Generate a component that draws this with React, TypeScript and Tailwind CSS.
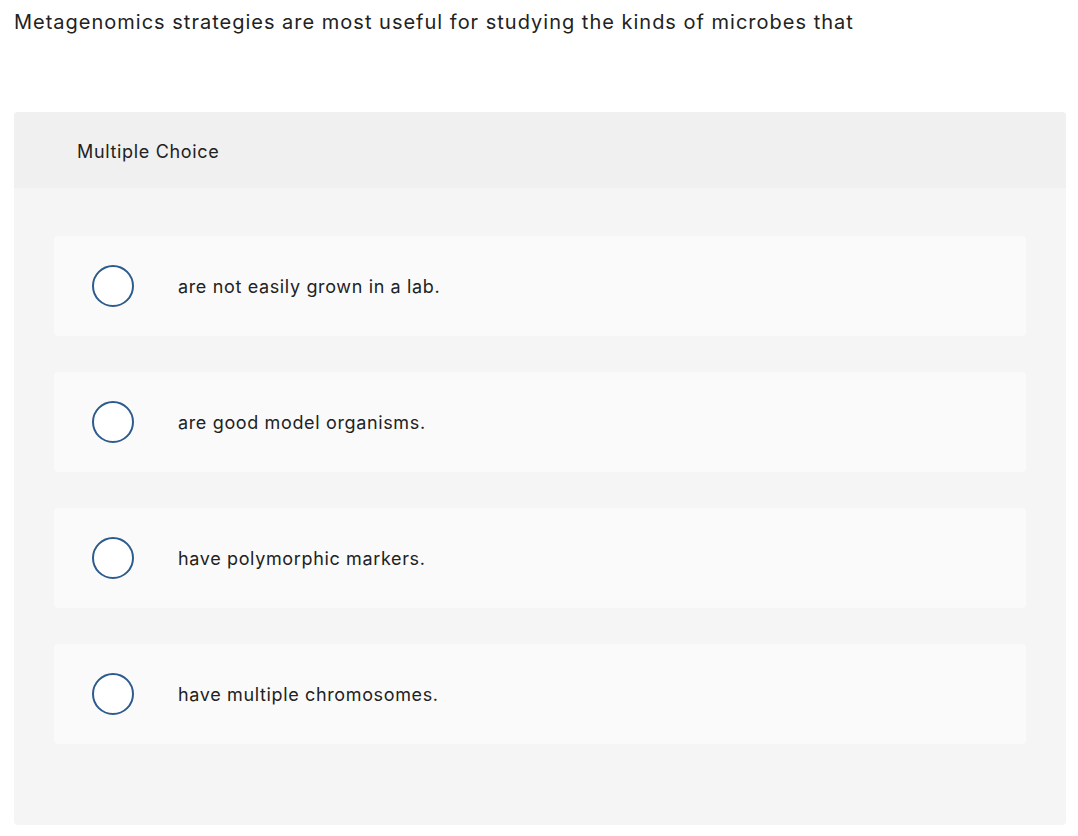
import React from "react";

const options = [
  "are not easily grown in a lab.",
  "are good model organisms.",
  "have polymorphic markers.",
  "have multiple chromosomes.",
];

export default function App() {
  return (
    <div className="min-h-[836px] bg-white text-[#222] font-['Inter','Open_Sans',sans-serif]">
      <div className="pl-[14px] pt-[8px]">
        <p className="text-[20px] leading-[28px] tracking-[1px]">
          Metagenomics strategies are most useful for studying the kinds of microbes that
        </p>
      </div>
      <div className="ml-[14px] mr-[12px] mt-[76px] rounded-[4px] bg-[#f5f5f5] overflow-hidden">
        <div className="h-[76px] bg-[#f0f0f0] flex items-center pl-[63px] pt-[2px]">
          <span className="text-[18px] tracking-[0.66px]">Multiple Choice</span>
        </div>
        <div className="px-[40px] pt-[48px] pb-[81px] flex flex-col gap-[36px]">
          {options.map((o) => (
            <div key={o} className="h-[100px] rounded-[4px] bg-[#fafafa] flex items-center">
              <div className="ml-[38px] w-[42px] h-[42px] rounded-full border-2 border-[#2d5b8e] bg-white shrink-0" />
              <span className="ml-[44px] text-[18px] tracking-[0.64px]">{o}</span>
            </div>
          ))}
        </div>
      </div>
    </div>
  );
}
